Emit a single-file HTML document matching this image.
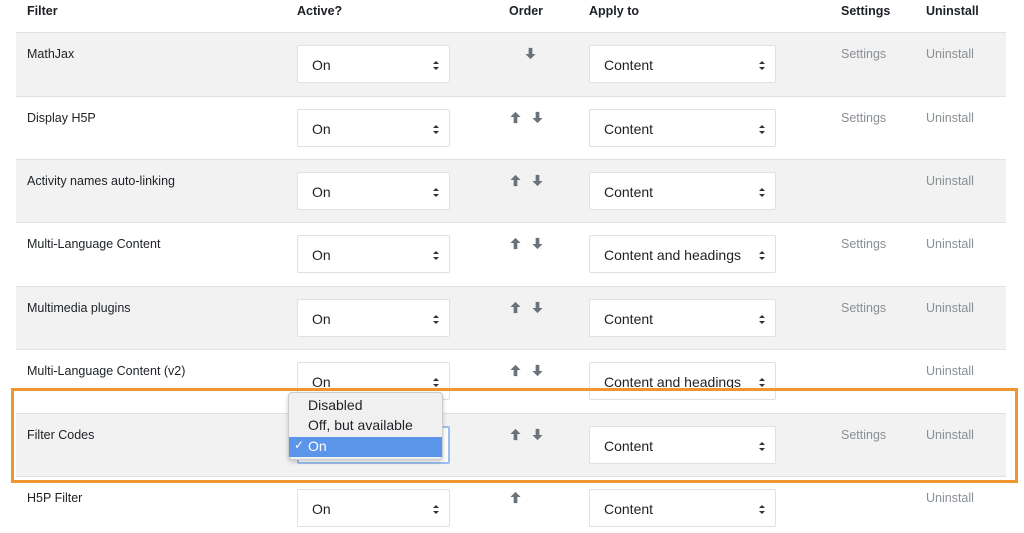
<!DOCTYPE html><html><head><style>
body{margin:0;width:1024px;height:532px;overflow:hidden;background:#fff;font-family:"Liberation Sans",sans-serif;color:#1d2125;position:relative}
.h{position:absolute;top:4px;font-size:12.5px;font-weight:bold}
.r{position:absolute;left:16px;width:990px;border-top:1px solid #dee2e6}
.g{background:#f2f2f2}
.n{position:absolute;left:11px;top:14px;font-size:12.5px}
.s{position:absolute;top:12px;height:38px;background:#fff;border:1px solid #dee2e6;border-radius:2px;font-size:14px;line-height:38px;padding-left:14px;box-sizing:border-box}
.s:after{content:"";position:absolute;right:10px;top:15px;width:0;height:0;border:3px solid transparent;border-bottom:3.5px solid #333;border-top:none}
.s:before{content:"";position:absolute;right:10px;top:21px;width:0;height:0;border:3px solid transparent;border-top:3.5px solid #333;border-bottom:none}
.a{left:281px;width:153px}.b{left:573px;width:187px}
.l{position:absolute;top:14px;font-size:12.5px;color:#8a8f94}
.ar{position:absolute;top:14px;width:13px;height:13px}
</style></head><body>
<svg width="0" height="0" style="position:absolute"><defs>
<symbol id="dn" viewBox="0 0 14 14"><path d="M5 1h4v6.5h3.5L7 13 1.5 7.5H5z" fill="#6a737b"/></symbol>
<symbol id="up" viewBox="0 0 14 14"><path d="M5 13h4V6.5h3.5L7 1 1.5 6.5H5z" fill="#6a737b"/></symbol>
</defs></svg>
<div class="h" style="left:27px">Filter</div><div class="h" style="left:297px">Active?</div><div class="h" style="left:509px">Order</div><div class="h" style="left:589px">Apply to</div><div class="h" style="left:841px">Settings</div><div class="h" style="left:926px">Uninstall</div>

<div class="r g" style="top:32px;height:63px"><div class="n">MathJax</div><div class="s a">On</div><svg class="ar" style="left:508px"><use href="#dn"/></svg><div class="s b">Content</div><div class="l" style="left:825px">Settings</div><div class="l" style="left:910px">Uninstall</div></div>
<div class="r" style="top:96px;height:62px"><div class="n">Display H5P</div><div class="s a">On</div><svg class="ar" style="left:493px"><use href="#up"/></svg><svg class="ar" style="left:515px"><use href="#dn"/></svg><div class="s b">Content</div><div class="l" style="left:825px">Settings</div><div class="l" style="left:910px">Uninstall</div></div>
<div class="r g" style="top:159px;height:62px"><div class="n">Activity names auto-linking</div><div class="s a">On</div><svg class="ar" style="left:493px"><use href="#up"/></svg><svg class="ar" style="left:515px"><use href="#dn"/></svg><div class="s b">Content</div><div class="l" style="left:910px">Uninstall</div></div>
<div class="r" style="top:222px;height:63px"><div class="n">Multi-Language Content</div><div class="s a">On</div><svg class="ar" style="left:493px"><use href="#up"/></svg><svg class="ar" style="left:515px"><use href="#dn"/></svg><div class="s b">Content and headings</div><div class="l" style="left:825px">Settings</div><div class="l" style="left:910px">Uninstall</div></div>
<div class="r g" style="top:286px;height:62px"><div class="n">Multimedia plugins</div><div class="s a">On</div><svg class="ar" style="left:493px"><use href="#up"/></svg><svg class="ar" style="left:515px"><use href="#dn"/></svg><div class="s b">Content</div><div class="l" style="left:825px">Settings</div><div class="l" style="left:910px">Uninstall</div></div>
<div class="r" style="top:349px;height:63px"><div class="n">Multi-Language Content (v2)</div><div class="s a">On</div><svg class="ar" style="left:493px"><use href="#up"/></svg><svg class="ar" style="left:515px"><use href="#dn"/></svg><div class="s b">Content and headings</div><div class="l" style="left:910px">Uninstall</div></div>
<div class="r g" style="top:413px;height:62px"><div class="n">Filter Codes</div><div class="s a" style="border:2px solid #9cbef0">On</div><svg class="ar" style="left:493px"><use href="#up"/></svg><svg class="ar" style="left:515px"><use href="#dn"/></svg><div class="s b">Content</div><div class="l" style="left:825px">Settings</div><div class="l" style="left:910px">Uninstall</div></div>
<div class="r" style="top:476px;height:56px"><div class="n">H5P Filter</div><div class="s a">On</div><svg class="ar" style="left:493px"><use href="#up"/></svg><div class="s b">Content</div><div class="l" style="left:910px">Uninstall</div></div>

<div style="position:absolute;left:11px;top:388px;width:1001px;height:89px;border:3px solid #f0962e"></div>
<div style="position:absolute;left:288px;top:392px;width:153px;height:66px;background:#f0f0f0;border:1px solid #ccc;border-radius:4px;box-shadow:0 2px 5px rgba(0,0,0,.2);font-size:14px">
<div style="position:absolute;left:19px;top:4px">Disabled</div>
<div style="position:absolute;left:19px;top:24px">Off, but available</div>
<div style="position:absolute;left:0;top:44px;width:153px;height:20px;background:#5b95ea;color:#fff"><span style="position:absolute;left:5px;top:1px;font-size:12px">✓</span><span style="position:absolute;left:19px;top:1px">On</span></div>
</div>
</body></html>
